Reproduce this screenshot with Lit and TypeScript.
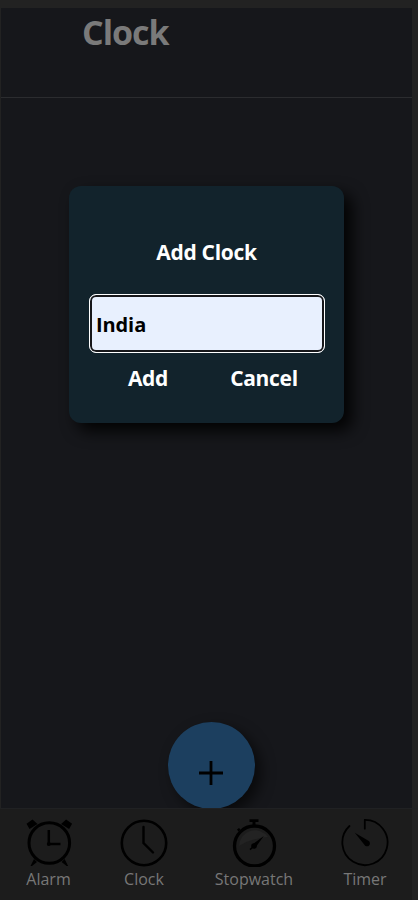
import { LitElement, html, css, svg } from "lit";
import { customElement } from "lit/decorators.js";

const FONT = css`"Open Sans", "Noto Sans", sans-serif`;

const alarmIcon = svg`
  <circle cx="24.300" cy="24" r="20.300" fill="none" stroke="#000" stroke-width="3"/>
  <path d="M23.800 11v14h11.700" fill="none" stroke="#000" stroke-width="2.500"/>
  <circle cx="23.800" cy="25" r="2" fill="#000"/>
  <path d="M1.500 4.700 7.500.5l5 4.500-8 5Z M47.100 4.700 41.100.5l-5 4.500 8 5Z" fill="#000"/>
  <path d="M9 40l3 3-5 4H5.500Z M39.600 40l-3 3 5 4h1.500Z" fill="#000"/>`;
const clockIcon = svg`
  <circle cx="24" cy="24" r="22.200" fill="none" stroke="#000" stroke-width="2.600"/>
  <path d="M23.500 8v16l9.500 9.500" fill="none" stroke="#000" stroke-width="2.400" stroke-linecap="round"/>`;
const stopwatchIcon = svg`
  <path d="M9 27A16 16 0 0 1 38 18Q22 19 9 27Z" fill="#232323"/>
  <circle cx="24.500" cy="27" r="20" fill="none" stroke="#000" stroke-width="3.300"/>
  <path d="M19.500.3h9V3h-3v4h-3V3h-3Z" fill="#000"/>
  <path d="M7 10.500l2-1.500 1.500 1.500-2 2Z" fill="#000"/>
  <path d="M33.800 17 25.500 28.500 22.500 25.500Z" fill="#000"/>
  <path d="M24 27l-4 3.600" stroke="#000" stroke-width="1.500" fill="none"/>
  <circle cx="24" cy="27" r="2.800" fill="#000"/>`;
const timerIcon = svg`
  <path d="M23.800.9A22.600 22.600 0 1 1 8.500 7" fill="none" stroke="#000" stroke-width="1.800" stroke-linecap="round"/>
  <path d="M23.800.9v8.800" fill="none" stroke="#000" stroke-width="1.800" stroke-linecap="round"/>
  <path d="M13.800 13.700 27 21.500a3 3 0 1 1-3.800 4Z" fill="#000"/>`;

const TABS = [
  { label: "Alarm", icon: alarmIcon },
  { label: "Clock", icon: clockIcon },
  { label: "Stopwatch", icon: stopwatchIcon },
  { label: "Timer", icon: timerIcon },
];

@customElement("app-root")
export class AppRoot extends LitElement {
  static styles = css`
    :host {
      display: block;
      width: 418px;
      height: 900px;
      overflow: hidden;
      background: #222222;
      font-family: ${FONT};
    }
    .frame {
      height: 892px;
      margin-top: 8px;
      margin-left: 1px;
      margin-right: 6px;
      background: #16171b;
      display: flex;
      flex-direction: column;
      position: relative;
    }
    .header {
      height: 90px;
      box-sizing: border-box;
      border-bottom: 1px solid #2b2c2f;
      padding: 1px 0 0 81px;
    }
    .title {
      margin: 0;
      font-size: 34px;
      line-height: 46px;
      font-weight: 700;
      letter-spacing: -1px;
      color: #7a7a7a;
    }
    .main {
      flex: 1;
      display: flex;
      flex-direction: column;
      align-items: flex-start;
      padding: 88px 0 0 68px;
    }
    .dialog {
      width: 275px;
      height: 237px;
      box-sizing: border-box;
      background: #12232c;
      border-radius: 12px;
      box-shadow: 8px 8px 16px rgba(0, 0, 0, 0.9);
      padding: 52px 20px 0;
      display: flex;
      flex-direction: column;
      color: #fff;
    }
    .dialog h2 {
      margin: 0;
      text-align: center;
      font-size: 21px;
      line-height: 28px;
      font-weight: 700;
      letter-spacing: -0.3px;
    }
    .field {
      margin-top: 28px;
      height: 59px;
      box-sizing: border-box;
      width: 236px;
      border-radius: 7px;
      border: 1px solid #fff;
      background: #e8f0fe;
      box-shadow: inset 0 0 0 2px #17171a;
      padding: 2px 6px 0;
      font-family: inherit;
      font-size: 20px;
      font-weight: 700;
      letter-spacing: -0.1px;
      color: #000;
      outline: none;
    }
    .actions {
      margin-top: 11px;
      display: flex;
      padding: 0 2px 0 1px;
    }
    .actions button {
      flex: 1;
      border: none;
      background: none;
      padding: 0;
      font-family: inherit;
      font-size: 21px;
      line-height: 28px;
      font-weight: 700;
      letter-spacing: -0.3px;
      color: #fff;
    }
    .fab {
      position: absolute;
      left: 167px;
      top: 714px;
      width: 87px;
      height: 87px;
      border-radius: 50%;
      border: none;
      padding: 0;
      background: #1c3f5f;
      box-shadow: 6px 6px 14px rgba(0, 0, 0, 0.6);
      display: flex;
      align-items: center;
      justify-content: center;
    }
    .fab svg {
      width: 24px;
      height: 24px;
      margin-top: 14px;
      margin-right: 1px;
    }
    .nav {
      height: 92px;
      box-sizing: border-box;
      margin: 0 -6px 0 -1px;
      background: #1c1c1c;
      border-top: 1px solid #202123;
      display: grid;
      grid-template-columns: 97px 94px 126px 1fr;
      padding-right: 5px;
      position: relative;
    }
    .tab {
      display: flex;
      flex-direction: column;
      align-items: center;
      padding-top: 10px;
      color: #777;
      font-size: 16px;
      line-height: 22px;
    }
    .tab svg {
      width: 48px;
      height: 48px;
      display: block;
      margin-bottom: 1px;
    }
    .strip {
      position: absolute;
      right: 0;
      top: 0;
      bottom: 0;
      width: 6px;
      background: #222;
    }
  `;

  render() {
    return html`
      <div class="frame">
        <header class="header"><h1 class="title">Clock</h1></header>
        <main class="main">
          <section class="dialog">
            <h2>Add Clock</h2>
            <input class="field" .value=${"India"} />
            <div class="actions">
              <button>Add</button>
              <button>Cancel</button>
            </div>
          </section>
        </main>
        <button class="fab" aria-label="Add">
          <svg viewBox="0 0 24 24"><path d="M12 0v24M0 12h24" stroke="#000" stroke-width="2.800" fill="none"/></svg>
        </button>
        <nav class="nav">
          ${TABS.map(
            (t) => html`<div class="tab">
              <svg viewBox="0 0 48 48">${t.icon}</svg>
              <span>${t.label}</span>
            </div>`
          )}
          <div class="strip"></div>
        </nav>
      </div>
    `;
  }
}
